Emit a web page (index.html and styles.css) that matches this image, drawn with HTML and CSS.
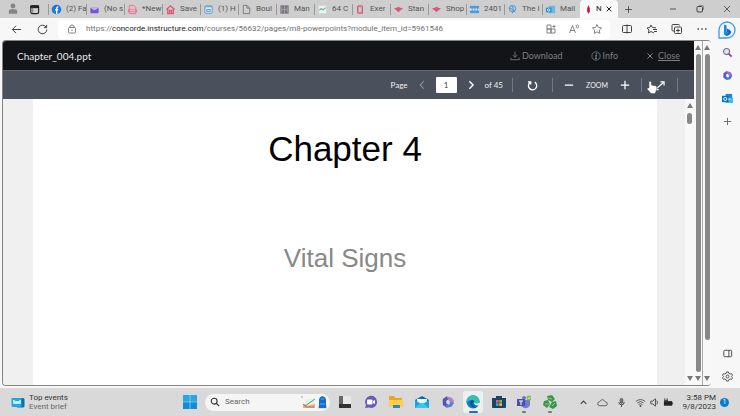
FILE: index.html
```html
<!DOCTYPE html>
<html lang="en">
<head>
<meta charset="utf-8">
<meta name="viewport" content="width=device-width, initial-scale=1">
<title>Chapter_004.ppt</title>
<link rel="stylesheet" href="styles.css">
</head>
<body>
<header class="tabstrip">
  <button class="profile" aria-label="Profile"><svg viewBox="0 0 12 12"><circle cx="6" cy="3" r="2.4" fill="#858585"/><path d="M1.8 10.800V8.500Q1.800 6.200 4 6.200h4q2.200 0 2.200 2.300v2.300z" fill="#858585"/></svg></button>
  <button class="actions" aria-label="Tab actions"><svg viewBox="0 0 12 12"><rect x="2" y="2" width="8.500" height="8.500" rx="1.500" fill="none" stroke="#222" stroke-width="1.200"/><path d="M1.500 1.500h9.500v3H1.500z" fill="#222"/><path d="M4 4v6" stroke="#777"/></svg></button>
  <nav class="tabs" aria-label="Tabs">
    <a class="tab" href="#"><svg viewBox="0 0 12 12"><circle cx="6" cy="6" r="5.200" fill="#1479e8"/><path d="M6.200 11V4.800Q6.200 3.200 8 3.200M4.300 6.300h3.500" stroke="#fff" stroke-width="1.500" fill="none"/></svg><span>(2) Fa</span></a>
    <a class="tab" href="#"><svg viewBox="0 0 12 12"><path d="M1.500 4h9v5q0 1-1 1h-7q-1 0-1-1z" fill="#7852d8"/><path d="M1.500 4l4.500 3 4.500-3" fill="#c3b2ff"/></svg><span>(No s</span></a>
    <a class="tab" href="#"><svg viewBox="0 0 12 12"><path d="M2.500 1.500h5l2 2v7h-7z" fill="#efb8c4" stroke="#dc7890"/><path d="M1 6h10v3H1z" fill="#dc7890"/><path d="M3 7.500h6" stroke="#f7dce2"/></svg><span>*New</span></a>
    <a class="tab" href="#"><svg viewBox="0 0 12 12"><path d="M1.500 6L6 2l4.500 4M3 5v5.500h6V5M5 10V7h2v3" fill="none" stroke="#df5775" stroke-width="1.500"/></svg><span>Save</span></a>
    <a class="tab" href="#"><svg viewBox="0 0 12 12"><rect x="2" y="2" width="8" height="8" rx="1" fill="#dcecfb" stroke="#5597d8"/><path d="M2 3h8M4 6h4v2H4z" stroke="#5597d8" fill="none"/></svg><span>(1) H</span></a>
    <a class="tab" href="#"><svg viewBox="0 0 12 12"><path d="M2.500 1.500h4l3 3v6h-7zM6.500 1.500v3h3" fill="none" stroke="#777"/></svg><span>Boul</span></a>
    <a class="tab" href="#"><svg viewBox="0 0 12 12"><path d="M1.500 1.500h9v9h-9z" fill="#77737a"/><path d="M3 3v6M6 2v8M9 3v6M3 6h6" stroke="#aaa4aa"/></svg><span>Man</span></a>
    <a class="tab" href="#"><svg viewBox="0 0 12 12"><path d="M2 2h8v8H2z" fill="#e9f5f1"/><path d="M2.500 7l2-2 2 1.500L9.500 4" fill="none" stroke="#62b69d" stroke-width="1.300"/></svg><span>64 C</span></a>
    <a class="tab" href="#"><svg viewBox="0 0 12 12"><rect x="3" y="2" width="5" height="8" rx="1" fill="none" stroke="#ce5674" stroke-width="1.400"/><path d="M4 4h3M4 8h3" stroke="#e79aac"/></svg><span>Exer</span></a>
    <a class="tab" href="#"><svg viewBox="0 0 12 12"><path d="M1 5l3-1 2-1 2 1 3 1-3 2-2 2-2-2z" fill="#df5775"/></svg><span>Stan</span></a>
    <a class="tab" href="#"><svg viewBox="0 0 12 12"><path d="M1 5l3-1 2-1 2 1 3 1-3 2-2 2-2-2z" fill="#df5775"/></svg><span>Shop</span></a>
    <a class="tab" href="#"><svg viewBox="0 0 12 12"><path d="M1 2h10v8H1z" fill="#4d9bd9"/><path d="M1 6h10" stroke="#e0eff9" stroke-width="2" stroke-dasharray="2 1"/></svg><span>2401</span></a>
    <a class="tab" href="#"><svg viewBox="0 0 12 12"><circle cx="6" cy="5" r="3.500" fill="#a9d0f0" stroke="#4c8ed0"/><path d="M2 4q4 1 7 5M5 2q3 2 1 8" fill="none" stroke="#4c8ed0"/></svg><span>The I</span></a>
    <a class="tab" href="#"><svg viewBox="0 0 12 12"><path d="M4 2h7v8H4z" fill="#63b9e7"/><path d="M1 4h6v5H1z" fill="#278bc4"/><circle cx="4" cy="6.500" r="1.300" fill="none" stroke="#e8f4fb"/></svg><span>Mail</span></a>
    <a class="tab current" href="#" aria-current="page"><svg viewBox="0 0 12 12"><path d="M6 1l1.500 4v3L6 11 4.500 8V5z" fill="#c71b3f"/></svg><span>N</span><svg class="x" viewBox="0 0 12 12"><path d="M2.500 2.500l7 7m0-7l-7 7" stroke="#222" stroke-width="1.500"/></svg></a>
  </nav>
  <button class="newtab" aria-label="New tab"><svg viewBox="0 0 12 12"><path d="M6 1.500v9M1.500 6h9" stroke="#333"/></svg></button>
  <div class="winbuttons">
    <button aria-label="Minimize"><svg viewBox="0 0 12 12"><path d="M3 6h6" stroke="#555"/></svg></button>
    <button aria-label="Restore"><svg viewBox="0 0 12 12"><rect x="3" y="3.500" width="5.500" height="5.500" rx="1" fill="none" stroke="#444"/><path d="M5 2.500h3.500q1 0 1 1V7" fill="none" stroke="#666" stroke-width=".6"/></svg></button>
    <button aria-label="Close window"><svg viewBox="0 0 12 12"><path d="M3 3l6 6m0-6L3 9" stroke="#555" stroke-width=".9"/></svg></button>
  </div>
</header>
<div class="browser">
  <div class="main">
    <div class="navbar">
      <button class="nav" aria-label="Back"><svg viewBox="0 0 12 12"><path d="M11 6H1.500M5.500 2L1.500 6l4 4" fill="none" stroke="#333"/></svg></button>
      <button class="nav" aria-label="Refresh"><svg viewBox="0 0 12 12"><path d="M10 3.500A4.700 4.700 0 1 0 10.700 6M10.500 1v3H7.500" fill="none" stroke="#333"/></svg></button>
      <div class="address">
        <svg viewBox="0 0 12 12"><rect x="2.500" y="4.500" width="7" height="5.500" rx="1" fill="none" stroke="#777" stroke-width=".9"/><path d="M4 4.500V3q2-2.500 4 0v1.500" fill="none" stroke="#777" stroke-width=".9"/><circle cx="6" cy="7.200" r=".7" fill="#777"/></svg>
        <a class="url" href="#">https://<b>concorde.instructure.com</b>/courses/56632/pages/m8-powerpoints?module_item_id=5961546</a>
        <button aria-label="Apps"><svg viewBox="0 0 12 12"><path d="M2 2h4v4H2zM2 6h4v4H2zM6 6h4v4H6zM7.500 3.500h3M9 2v3" fill="none" stroke="#777" stroke-width=".9"/></svg></button>
        <button aria-label="Read aloud"><svg viewBox="0 0 12 12"><path d="M1.500 10L4.500 2.500 7.500 10M2.500 7.500h4M8 2q1 1 0 3M9.500 1.500q2 2 0 4" fill="none" stroke="#777" stroke-width=".9"/></svg></button>
        <button aria-label="Favorite"><svg viewBox="0 0 12 12"><path d="M6 1.500l1.400 2.900 3.200.5-2.300 2.200.5 3.200L6 8.800l-2.800 1.500.5-3.200-2.300-2.200 3.200-.5z" fill="none" stroke="#777" stroke-width=".9"/></svg></button>
      </div>
      <div class="tools">
        <button aria-label="Split screen"><svg viewBox="0 0 12 12"><rect x="1.500" y="2.500" width="9" height="7" rx="1" fill="none" stroke="#444"/><path d="M6 1.500v9" stroke="#444"/></svg></button>
        <button aria-label="Favorites"><svg viewBox="0 0 12 12"><path d="M8 10L5 8.500 2.400 10 3 7 1 5l2.800-.5L5 2l1.400 2.500 3.600.3M7 6.500h4M8 8.500h3" fill="none" stroke="#444"/></svg></button>
        <button aria-label="Collections"><svg viewBox="0 0 12 12"><path d="M3 8H2q-1 0-1-1V2.500q0-1 1-1h5.500q1 0 1 1" fill="none" stroke="#444"/><rect x="3.500" y="4" width="7" height="6.500" rx="1" fill="none" stroke="#444"/><path d="M7 5.500v4M5 7.500h4" stroke="#444"/></svg></button>
        <button aria-label="More"><svg viewBox="0 0 12 12"><path d="M1.500 6h1.400M5.300 6h1.400M9.100 6h1.400" stroke="#333" stroke-width="1.300"/></svg></button>
      </div>
    </div>
    <div class="pageframe">
      <section class="viewer">
        <header class="filebar">
          <h1>Chapter_004.ppt</h1>
          <a href="#"><svg viewBox="0 0 12 12"><path d="M6 1v6.500M3.500 5L6 7.500 8.500 5M1 8v2.500h10V8" fill="none" stroke="currentColor"/></svg>Download</a>
          <a href="#"><svg viewBox="0 0 12 12"><circle cx="6" cy="6" r="5" fill="none" stroke="currentColor"/><path d="M6.800 2.500v1.200M5 5h1.500L5.500 9H7" fill="none" stroke="currentColor" stroke-width="1.300"/></svg>Info</a>
          <a class="close" href="#"><svg viewBox="0 0 12 12"><path d="M2 2l8 8m0-8l-8 8" stroke="#999" stroke-width="1.300"/></svg><span>Close</span></a>
        </header>
        <div class="docbar">
          <div class="group pager">
            <label for="page">Page</label>
            <button aria-label="Previous page"><svg viewBox="0 0 12 12"><path d="M8 1.500L4 6l4 4.500" fill="none" stroke="#959ba3" stroke-width="1.300"/></svg></button>
            <input id="page" value="1">
            <button aria-label="Next page"><svg viewBox="0 0 12 12"><path d="M4 1.500L8.500 6 4 10.500" fill="none" stroke="#fff" stroke-width="1.700"/></svg></button>
            <span>of 45</span>
          </div>
          <div class="group rotate"><button aria-label="Rotate"><svg viewBox="0 0 12 12"><path d="M3.500 2.500A4.500 4.500 0 1 0 8.500 2.400M1 2h3v3" fill="none" stroke="#fff" stroke-width="1.500"/></svg></button></div>
          <div class="group zoom">
            <button aria-label="Zoom out"><svg viewBox="0 0 12 12"><path d="M1 6h10" stroke="#fff" stroke-width="1.500"/></svg></button>
            <span>ZOOM</span>
            <button aria-label="Zoom in"><svg viewBox="0 0 12 12"><path d="M6 1v10M1 6h10" stroke="#fff" stroke-width="1.500"/></svg></button>
          </div>
          <div class="group expand"><button aria-label="Full screen"><svg viewBox="0 0 12 12"><path d="M2 10l8-7M7 2h4v4M1 6.500v4h4" fill="none" stroke="#fff" stroke-width="1.300"/></svg></button>
            <svg class="cursor" viewBox="0 0 12 14"><path d="M3 8V2q1.200-1.500 2.300 0v3l4.500 1q1.200.5 1 2l-1 4-1 1.500H5L1 9q0-1.500 2-1z" fill="#fff" stroke="#555b65" stroke-width=".5"/></svg>
          </div>
        </div>
        <div class="document">
          <article class="slide"><h2>Chapter 4</h2><p>Vital Signs</p></article>
          <div class="scroll inner"><i class="up"></i><i class="thumb"></i><i class="down"></i></div>
        </div>
      </section>
      <div class="scroll mid"><i class="up"></i><i class="thumb"></i><i class="down"></i></div>
      <div class="scroll outer"><i class="up"></i><i class="thumb"></i><i class="down"></i></div>
    </div>
  </div>
  <aside class="sidebar">
    <button class="bing" aria-label="Bing"><svg viewBox="0 0 18 18"><path d="M1 17V9a8 8 0 1 1 8 8z" fill="#eef8ff" stroke="#4597e5" stroke-width="1.300"/><path d="M6 3.500l2.600 1v6L12 12.500 8.500 15 6 13.500z" fill="#168be0"/><path d="M8.600 7.500l3.400 1.500q2 2.500 0 4.300-2 2-4.500 1l3-2.500-1.500-1z" fill="#1c5fd1"/></svg></button>
    <button aria-label="Search"><svg viewBox="0 0 12 12"><circle cx="5" cy="5" r="3.300" fill="#dbe8f5" stroke="#7a6b88" stroke-width="1.200"/><path d="M7.500 7.500L10.500 10.500" stroke="#8b3fb0" stroke-width="2"/></svg></button>
    <button aria-label="Microsoft 365"><svg viewBox="0 0 12 12"><path d="M5 1L1.500 3.500v5L5 11l1-3-1.500-1V5L7 3.500z" fill="#6754d6"/><path d="M5 1l4.500 1.500L11 5v3L8 6 6 4z" fill="#9d6bdc"/><path d="M11 7l-2 3-4 1-1-2.500L7.500 8V5.500z" fill="#377cd8"/></svg></button>
    <button aria-label="Outlook"><svg viewBox="0 0 12 12"><path d="M4 1h7v5H4z" fill="#1689d8"/><path d="M4 5l3.500 2.500L12 5v6H4z" fill="#40b8ee"/><path d="M0 3h7v7H0z" fill="#0874bd"/><circle cx="3.500" cy="6.500" r="1.700" fill="none" stroke="#fff"/></svg></button>
    <button aria-label="Add"><svg viewBox="0 0 12 12"><path d="M6 2v8M2 6h8" stroke="#666"/></svg></button>
    <button class="panel" aria-label="Hide sidebar"><svg viewBox="0 0 12 12"><rect x="2" y="2.500" width="8.500" height="7" rx="1" fill="none" stroke="#444"/><path d="M7.500 2.500v7" stroke="#444"/></svg></button>
    <button aria-label="Settings"><svg viewBox="0 0 12 12"><path d="M5 1h2l.4 1.500L9 3.300l1.500-.4 1 1.700L10.300 6l1.200 1.400-1 1.700-1.500-.4-1.600.8L7 11H5l-.4-1.500L3 8.700l-1.500.4-1-1.700L1.700 6 .5 4.600l1-1.700 1.500.4 1.600-.8z" fill="none" stroke="#444"/><circle cx="6" cy="6" r="1.600" fill="none" stroke="#444"/></svg></button>
  </aside>
</div>
<footer class="taskbar">
  <button class="events"><svg viewBox="0 0 14 14"><path d="M6 3h6q1.500 0 1.500 1.500V11q0 1.500-1.500 1.500H6z" fill="#0c6eb9"/><path d="M.5 3h10v9H2Q.5 12 .5 10.500z" fill="#23a7df"/><path d="M3 5v3h6V5M5 8V6m2 2V6" fill="none" stroke="#e8fbff" stroke-width="1.500"/></svg><span>Top events<small>Event brief</small></span></button>
  <div class="apps">
    <button aria-label="Start"><svg viewBox="0 0 14 14"><path d="M0 0h6.700v6.700H0zM7.300 0H14v6.700H7.300z" fill="#24a8e5"/><path d="M0 7.300h6.700V14H0zM7.300 7.300H14V14H7.300z" fill="#148bd5"/></svg></button>
    <label class="search"><svg viewBox="0 0 12 12"><circle cx="5" cy="5" r="3.500" fill="none" stroke="#333" stroke-width="1.300"/><path d="M7.500 7.500l3.500 3.500" stroke="#333" stroke-width="1.300"/></svg><input type="search" placeholder="Search" aria-label="Search"><svg class="art" viewBox="0 0 26 14"><path d="M2 9h12v4H2z" fill="#e4b184"/><path d="M4 5l9-2 1 6-9 2z" fill="#e7f1dc"/><path d="M4 11l10-7" stroke="#3da18c"/><path d="M2 9l3 3h8" stroke="#bf734f" fill="none"/><circle cx="1" cy="2" r=".8" fill="#9a9e9e"/><path d="M17 12h9" stroke="#dec4af" stroke-width="3"/><path d="M18 13V5q0-3 3.500-4Q25 2 25 5v8z" fill="#136bd7"/><path d="M20 4h3M19 9h5" stroke="#54adef"/></svg></label>
    <div class="pinned">
      <button aria-label="Task view"><svg viewBox="0 0 14 14"><path d="M1 1h9v9H1z" fill="#202020"/><path d="M5 1h8v8H5z" fill="#e8e8e8"/><path d="M1 9h12v4H1z" fill="#333"/><path d="M1 1h4v8H1z" fill="#666"/></svg></button>
      <button aria-label="Chat"><svg viewBox="0 0 14 14"><path d="M1 13l1-3a6 6 0 1 1 3 2.500z" fill="#665bb7"/><rect x="3" y="4.500" width="5.500" height="5" rx="1" fill="#fff"/><path d="M9 6l2-1v4L9 8z" fill="#fff"/></svg></button>
      <button aria-label="File Explorer"><svg viewBox="0 0 14 14"><path d="M0 1h5l1.500 2H13v9H0z" fill="#e9a820"/><path d="M0 5h14v7H0z" fill="#ffcf48"/><path d="M4 10h7v3H4z" fill="#2987cf"/></svg></button>
      <button aria-label="Mail"><svg viewBox="0 0 14 14"><path d="M0 5l7-4 7 4v8H0z" fill="#086fac"/><path d="M2 4h10v5H2z" fill="#eef8fb"/><path d="M0 5l7 4.500L14 5v8H0z" fill="#1ba4e3"/><path d="M0 13l6-5h2l6 5z" fill="#40c5ef"/></svg></button>
      <button aria-label="Microsoft 365"><svg viewBox="0 0 12 12"><path d="M5 1L1.500 3.500v5L5 11l1-3-1.500-1V5L7 3.500z" fill="#5754b0"/><path d="M5 1l4.500 1.500L11 5v3L8 6 6 4z" fill="#a586ce"/><path d="M11 7l-2 3-4 1-1-2.500L7.500 8V5.500z" fill="#5a7fce"/></svg></button>
      <button class="active" aria-label="Microsoft Edge"><svg viewBox="0 0 14 14"><circle cx="7" cy="7" r="6.500" fill="#147bc3"/><path d="M.5 7A6.500 6.500 0 0 1 13.500 6q.2 3.500-3.500 3.500-2 0-1.500-1.500Q9 5 6 5 2 5 .5 8z" fill="#35bfae"/><path d="M6 5Q3 7 5 10.500 7 14 11 12q-4 0-4.500-3.500Q6.500 7 8 6z" fill="#075395"/><path d="M8 7q1 2.500 5 1l1 .5-2 2q-4 0-4-3.500" fill="#f6f8f8"/></svg></button>
      <button aria-label="Store"><svg viewBox="0 0 14 14"><path d="M4 3V1h6v2M0 3h14v9q0 1-1 1H1q-1 0-1-1z" fill="#174563"/><path d="M4 5h2.700v2.700H4z" fill="#ee6546"/><path d="M7.300 5H10v2.700H7.300z" fill="#87b846"/><path d="M4 8.200h2.700v2.700H4z" fill="#36a3dd"/><path d="M7.300 8.200H10v2.700H7.300z" fill="#efbd3e"/></svg></button>
      <button class="running" aria-label="Teams"><svg viewBox="0 0 14 14"><circle cx="7" cy="3" r="2" fill="#7376cc"/><path d="M5 5h8v5q-2 4-6 3l-3-2z" fill="#7279ce"/><path d="M0 4h8v7H0z" fill="#4b4ea8"/><path d="M2 6h4M4 6v4" stroke="#fff"/><circle cx="12" cy="3" r="2.500" fill="#82bd45"/><path d="M10.800 3l1 1 1.500-2" fill="none" stroke="#fff" stroke-width=".7"/></svg></button>
      <button class="running" aria-label="Green app"><svg viewBox="0 0 14 14"><path d="M4 1l5-1 3 4-3 3-4-2zM1 6l4-1 2 4-3 4-4-3zM9 7l4-1 1 5-4 3-4-2z" fill="#39964a"/><path d="M5 3l4 1M2 9h4M9 11l3-3" stroke="#92ca83"/></svg></button>
    </div>
  </div>
  <div class="tray">
    <button aria-label="Hidden icons"><svg viewBox="0 0 12 12"><path d="M3 7.500L6 4.500l3 3" fill="none" stroke="#444" stroke-width="1.200"/></svg></button>
    <button aria-label="OneDrive"><svg viewBox="0 0 12 12"><path d="M3 9.500a2.200 2.200 0 0 1 0-4.400q3-4.600 6 .2 2.500.2 2.200 2.500-.2 1.700-2.200 1.700z" fill="none" stroke="#555"/></svg></button>
    <button aria-label="Microphone"><svg viewBox="0 0 12 12"><rect x="4.500" y="1.500" width="3" height="5.500" rx="1.500" fill="#777" stroke="#444" stroke-width=".7"/><path d="M3 5.500q0 3 3 3t3-3M6 8.500v2.500" fill="none" stroke="#444"/></svg></button>
    <button class="status" aria-label="Network, volume and battery">
      <svg viewBox="0 0 12 12"><path d="M1 4.800q5-4 10 0M2.500 6.500q3.500-3 7 0M4 8.200q2-1.700 4 0" fill="none" stroke="#555"/><circle cx="6" cy="9.800" r="1" fill="#444"/></svg>
      <svg viewBox="0 0 12 12"><path d="M2 4.500h2L7 2v8L4 7.500H2zM8.500 4q1.500 2 0 4" fill="none" stroke="#444"/></svg>
      <svg viewBox="0 0 12 12"><path d="M1 4.500h9v5H1z" fill="#222"/><path d="M10.500 6v2M2 1.500v3M4.500 1.500v3" stroke="#333"/><path d="M1.500 3.500h4v2h-4z" fill="#333"/></svg>
    </button>
    <time datetime="2023-09-08T15:58">3:58 PM<br>9/8/2023</time>
    <span class="badge">1</span>
  </div>
</footer>
</body>
</html>
```
FILE: styles.css
```css
* { box-sizing: border-box; }
body {
  margin: 0; min-height: 100vh; display: flex; flex-direction: column;
  font: 8px/10px Roboto, "Noto Sans", sans-serif; color: #333; background: #f7f7f7;
}
button { border: 0; padding: 0; background: none; font: inherit; color: inherit; display: flex; align-items: center; justify-content: center; }
a { color: inherit; text-decoration: none; }
svg { display: block; width: 12px; height: 12px; flex: none; }
h1, h2, p { margin: 0; font-weight: 400; }

.tabstrip { display: flex; height: 18px; background: #cecece; align-items: stretch; }
.profile { width: 26px; }
.actions { width: 17px; margin-right: 5px; }
.actions svg { width: 11px; height: 11px; }
.tabs { display: flex; }
.tab { display: flex; align-items: center; width: 38px; padding-left: 3px; gap: 4px; color: #555; position: relative; }
.tab::before { content: ""; position: absolute; left: 0; top: 4px; bottom: 3px; width: 1px; background: #999; }
.tab svg { width: 11px; height: 11px; }
.tab span { white-space: nowrap; }
.tab.current { background: #f9f9f9; border-radius: 4px 4px 0 0; gap: 2px; color: #222; }
.tab.current::before { display: none; }
.tab.current .x { width: 8px; height: 8px; margin: 0 5px 0 auto; }
.newtab { width: 20px; }
.newtab svg { width: 9px; height: 9px; }
.winbuttons { display: flex; margin-left: auto; }
.winbuttons button { width: 27px; }

.browser { flex: 1; display: flex; background: #f7f7f7; }
.main { flex: 1; min-width: 0; display: flex; flex-direction: column; }
.navbar { display: flex; height: 22px; align-items: center; padding-left: 3px; }
.nav { width: 26px; }
.nav svg { width: 11px; height: 11px; }
.address { flex: 1; display: flex; height: 19px; align-items: center; margin-left: 3px; padding: 0 2px 0 8px; background: #fff; border-radius: 4px; min-width: 0; }
.url { flex: 1; min-width: 0; margin-left: 8px; overflow: hidden; white-space: nowrap; color: #707070; }
.url b { font-weight: 400; color: #222; }
.address button { width: 23px; }
.tools { display: flex; margin-left: 4px; }
.tools button { width: 25px; }

.pageframe { flex: 1; display: flex; margin: 0 3px 2px 2px; border: 1px solid #858585; border-right: 0; border-radius: 4px; overflow: hidden; background: #fafafa; }
.viewer { flex: 1; min-width: 0; display: flex; flex-direction: column; font-family: Lato, sans-serif; }
.filebar { display: flex; height: 29px; align-items: center; padding: 0 14px; background: #121418; color: #7d7f83; font-size: 9px; line-height: 12px; }
.filebar h1 { margin-right: auto; font-size: 10px; line-height: 12px; color: #e8e8e8; }
.filebar a { display: flex; align-items: center; gap: 2px; margin-left: 28px; }
.filebar svg { width: 10px; height: 10px; }
.filebar .close { gap: 4px; }
.filebar .close svg { width: 8px; height: 8px; }
.filebar .close span { text-decoration: underline; }
.docbar { display: flex; height: 29px; align-items: center; justify-content: flex-end; padding-right: 16px; background: #4a505c; border-top: 1px solid #626770; color: #f1f1f1; }
.group { display: flex; height: 14px; align-items: center; justify-content: center; border-right: 1px solid #747a84; position: relative; }
.group svg { width: 11px; height: 11px; }
.pager { gap: 9px; padding-right: 9px; }
.pager input { width: 21px; height: 16px; border: 0; border-radius: 1px; padding: 0; text-align: center; font: 8px/10px Lato, sans-serif; color: #444; background: #fff; }
.pager button svg { width: 10px; height: 10px; }
.rotate { width: 40px; }
.zoom { width: 89px; gap: 12px; font-size: 7px; }
.zoom svg { width: 10px; height: 10px; }
.expand { width: 36px; }
.expand .cursor { position: absolute; left: 4px; top: 2px; width: 12px; height: 14px; }
.document { flex: 1; display: flex; background: #f0f0f0; padding-left: 30px; }
.slide { flex: 1; background: #fff; margin-right: 28px; padding-top: 30px; text-align: center; font-family: "Liberation Sans", Arial, sans-serif; }
.slide h2 { font-size: 35px; line-height: 40px; color: #000; }
.slide p { margin-top: 74px; font-size: 26px; line-height: 30px; color: #888; }
.scroll { width: 9px; display: flex; flex-direction: column; align-items: center; padding: 4px 0; background: #f8f8f8; gap: 4px; }
.scroll i { display: block; flex: none; }
.up, .down { border: 3px solid transparent; width: 6px; }
.up { border-top: 0; border-bottom: 5px solid #777; }
.down { border-bottom: 0; border-top: 5px solid #777; margin-top: auto; }
.thumb { width: 5px; border-radius: 3px; background: #888; }
.inner .thumb { height: 11px; margin-top: 1px; }
.mid { border-right: 1px solid #aaa; }
.scroll.mid .thumb { flex: 1; }
.scroll.outer { width: 8px; }
.outer .thumb { height: 85%; }

.sidebar { width: 26px; display: flex; flex-direction: column; align-items: center; padding: 3px 0 6px; gap: 12px; }
.bing { margin-bottom: -4px; }
.sidebar .bing svg { width: 18px; height: 18px; }
.sidebar svg { width: 11px; height: 11px; }
.panel { margin-top: auto; }

.taskbar { display: flex; height: 28px; align-items: center; background: #d9d9d9; padding: 0 11px; }
.events { gap: 4px; text-align: left; line-height: 9px; width: 169px; justify-content: flex-start; }
.events svg { width: 14px; height: 14px; }
.events small { display: block; font-size: 8px; color: #666; }
.apps { display: flex; align-items: center; gap: 5px; }
.pinned { display: flex; justify-content: space-between; width: 225px; }
.apps button { width: 20px; height: 22px; border-radius: 3px; position: relative; }
.apps button svg { width: 14px; height: 14px; }
.apps .search { display: flex; width: 125px; height: 17px; align-items: center; padding: 0 3px 0 5px; gap: 5px; background: #f5f5f5; border-radius: 9px; }
.apps .search svg { width: 10px; height: 10px; }
.apps .search .art { width: 26px; height: 14px; }
.search input { flex: 1; min-width: 0; border: 0; padding: 0; background: none; font: inherit; }
.search input::placeholder { color: #666; opacity: 1; }
.apps .active { background: #efefef; }
.active::after, .running::after { content: ""; position: absolute; bottom: 0; width: 4px; height: 2px; border-radius: 1px; background: #777; }
.active::after { width: 9px; background: #1875bd; }
.tray { display: flex; align-items: center; margin-left: auto; gap: 8px; }
.tray svg { width: 11px; height: 11px; }
.status { gap: 3px; }
.tray time { text-align: right; font-size: 8px; line-height: 9px; }
.badge { width: 9px; height: 9px; margin-left: -4px; border-radius: 50%; background: #087bcf; color: #fff; font-size: 7px; line-height: 9px; text-align: center; }
```
